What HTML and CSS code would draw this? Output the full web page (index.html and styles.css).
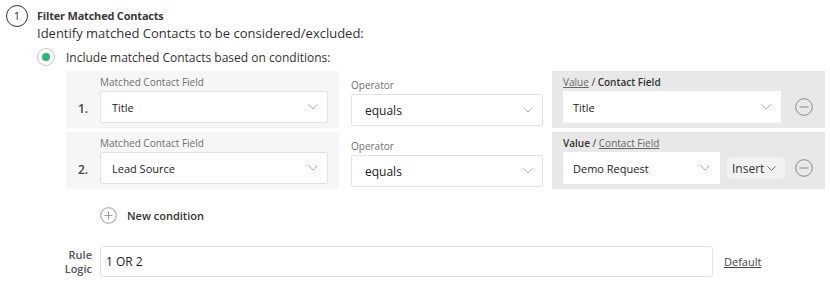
FILE: index.html
```html
<!DOCTYPE html>
<html>
<head>
<meta charset="utf-8">
<link rel="stylesheet" href="styles.css">
</head>
<body>
<div class="step">
  <div class="step-num">1</div>
  <div class="step-body">
    <div class="step-title">Filter Matched Contacts</div>
    <div class="step-desc">Identify matched Contacts to be considered/excluded:</div>
    <div class="radio-row">
      <span class="radio"><span class="radio-dot"></span></span>
      <span class="radio-label">Include matched Contacts based on conditions:</span>
    </div>
  </div>
</div>

<div class="conditions">
  <div class="cond-row">
    <div class="cell-field">
      <div class="idx">1.</div>
      <div class="field">
        <div class="lbl">Matched Contact Field</div>
        <div class="select"><span>Title</span><svg class="chev" width="10" height="6" viewBox="0 0 10 6"><path d="M0.5 0.5 L5 5 L9.5 0.5" fill="none" stroke="#b5b5b5" stroke-width="1"/></svg></div>
      </div>
    </div>
    <div class="cell-op">
      <div class="lbl">Operator</div>
      <div class="select op"><span>equals</span><svg class="chev" width="10" height="6" viewBox="0 0 10 6"><path d="M0.5 0.5 L5 5 L9.5 0.5" fill="none" stroke="#b5b5b5" stroke-width="1"/></svg></div>
    </div>
    <div class="cell-val">
      <div class="lbl val-lbl"><span class="lnk">Value</span> / <b>Contact Field</b></div>
      <div class="val-line">
        <div class="select val-wide"><span>Title</span><svg class="chev" width="10" height="6" viewBox="0 0 10 6"><path d="M0.5 0.5 L5 5 L9.5 0.5" fill="none" stroke="#b5b5b5" stroke-width="1"/></svg></div>
        <svg class="minus" width="18" height="18" viewBox="0 0 18 18"><circle cx="9" cy="9" r="8.3" fill="none" stroke="#8a8a8a" stroke-width="1"/><path d="M4.5 9 H13.5" stroke="#8a8a8a" stroke-width="1"/></svg>
      </div>
    </div>
  </div>

  <div class="cond-row">
    <div class="cell-field">
      <div class="idx">2.</div>
      <div class="field">
        <div class="lbl">Matched Contact Field</div>
        <div class="select"><span>Lead Source</span><svg class="chev" width="10" height="6" viewBox="0 0 10 6"><path d="M0.5 0.5 L5 5 L9.5 0.5" fill="none" stroke="#b5b5b5" stroke-width="1"/></svg></div>
      </div>
    </div>
    <div class="cell-op">
      <div class="lbl">Operator</div>
      <div class="select op"><span>equals</span><svg class="chev" width="10" height="6" viewBox="0 0 10 6"><path d="M0.5 0.5 L5 5 L9.5 0.5" fill="none" stroke="#b5b5b5" stroke-width="1"/></svg></div>
    </div>
    <div class="cell-val">
      <div class="lbl val-lbl"><b>Value</b> / <span class="lnk">Contact Field</span></div>
      <div class="val-line">
        <div class="select val-short"><span>Demo Request</span><svg class="chev" width="10" height="6" viewBox="0 0 10 6"><path d="M0.5 0.5 L5 5 L9.5 0.5" fill="none" stroke="#b5b5b5" stroke-width="1"/></svg></div>
        <div class="insert">Insert<svg width="9" height="5" viewBox="0 0 9 5"><path d="M0.5 0.5 L4.5 4.3 L8.5 0.5" fill="none" stroke="#666" stroke-width="1"/></svg></div>
        <svg class="minus" width="18" height="18" viewBox="0 0 18 18"><circle cx="9" cy="9" r="8.3" fill="none" stroke="#8a8a8a" stroke-width="1"/><path d="M4.5 9 H13.5" stroke="#8a8a8a" stroke-width="1"/></svg>
      </div>
    </div>
  </div>
</div>

<div class="new-cond">
  <svg width="17" height="17" viewBox="0 0 17 17"><circle cx="8.5" cy="8.5" r="7.8" fill="none" stroke="#9a9a9a" stroke-width="1"/><path d="M4.5 8.5 H12.5 M8.5 4.5 V12.5" stroke="#9a9a9a" stroke-width="1"/></svg>
  <span>New condition</span>
</div>

<div class="rule">
  <div class="rule-lbl">Rule<br>Logic</div>
  <div class="rule-input">1 OR 2</div>
  <a class="default">Default</a>
</div>
</body>
</html>
```

FILE: styles.css
```css
* { box-sizing: border-box; }
body {
  margin: 0;
  font-family: "Open Sans", sans-serif;
  color: #333;
  background: #fff;
  width: 830px;
  height: 283px;
  overflow: hidden;
}
.step {
  display: flex;
  padding: 5px 0 0 6px;
}
.step-num {
  width: 22px;
  height: 22px;
  border: 1px solid #333;
  border-radius: 50%;
  font-size: 11px;
  line-height: 20px;
  text-align: center;
  flex: none;
}
.step-body {
  margin-left: 9px;
}
.step-title {
  font-size: 11px;
  font-weight: 700;
  line-height: 16px;
  margin-top: 3px;
  color: #3a3a3a;
  letter-spacing: -0.2px;
}
.step-desc {
  font-size: 13px;
  line-height: 18px;
}
.radio-row {
  display: flex;
  align-items: center;
  margin-top: 6px;
}
.radio {
  width: 18px;
  height: 18px;
  border: 1px solid #c9c9c9;
  border-radius: 50%;
  display: flex;
  align-items: center;
  justify-content: center;
  flex: none;
}
.radio-dot {
  width: 8px;
  height: 8px;
  border-radius: 50%;
  background: #2bb673;
}
.radio-label {
  font-size: 12px;
  margin-left: 11px;
}
.conditions {
  margin: 5px 0 0 66px;
  display: flex;
  flex-direction: column;
  gap: 4px;
}
.cond-row {
  display: grid;
  grid-template-columns: 273px 192px 270px;
  column-gap: 12px;
  height: 57px;
}
.cond-row > .cell-val { margin-left: -3px; }
.cell-field {
  background: #f6f6f6;
  display: flex;
  padding: 4px 11px 0 0;
}
.idx {
  width: 34px;
  padding-left: 12px;
  font-size: 12px;
  font-weight: 600;
  padding-top: 25px;
  color: #444;
}
.field { flex: 1; }
.lbl {
  font-size: 10px;
  color: #6f6f6f;
  line-height: 14px;
  height: 16px;
}
.select {
  height: 32px;
  background: #fff;
  border: 1px solid #e3e3e3;
  border-radius: 2px;
  display: flex;
  align-items: center;
  justify-content: space-between;
  padding: 0 9px 0 11px;
  font-size: 11px;
  color: #222;
}
.cell-op {
  padding-top: 7px;
}
.select.op {
  height: 32px;
  font-size: 12px;
  padding-left: 13px;
}
.cell-val {
  background: #e8e8e8;
  padding: 4px 12px 0 11px;
}
.val-lbl { color: #333; }
.val-lbl b { font-weight: 600; }
.lnk { color: #666; text-decoration: underline; }
.val-line {
  display: flex;
  align-items: center;
}
.val-line .select { border-color: #fff; border-radius: 0; padding-left: 9px; }
.val-wide { width: 218px; }
.val-short { width: 157px; }
.insert {
  margin-left: 7px;
  width: 58px;
  height: 22px;
  background: #f1f1f1;
  border-radius: 2px;
  font-size: 12px;
  display: flex;
  align-items: center;
  padding-left: 5px;
  gap: 3px;
  color: #333;
}
.minus { margin-left: auto; }
.new-cond {
  display: flex;
  align-items: center;
  margin: 18px 0 0 100px;
  font-size: 11px;
  font-weight: 600;
  color: #333;
}
.new-cond span { margin-left: 10px; }
.rule {
  display: flex;
  align-items: center;
  margin: 22px 0 0 0;
}
.rule-lbl {
  width: 94px;
  text-align: right;
  font-size: 11px;
  font-weight: 600;
  line-height: 14px;
  color: #555;
  padding-right: 2px;
}
.rule-input {
  margin-left: 6px;
  width: 613px;
  height: 31px;
  border: 1px solid #e3e3e3;
  border-radius: 3px;
  font-size: 12px;
  line-height: 29px;
  padding-left: 5px;
  color: #222;
}
.default {
  margin-left: 11px;
  font-size: 11px;
  color: #444;
  text-decoration: underline;
}
```
